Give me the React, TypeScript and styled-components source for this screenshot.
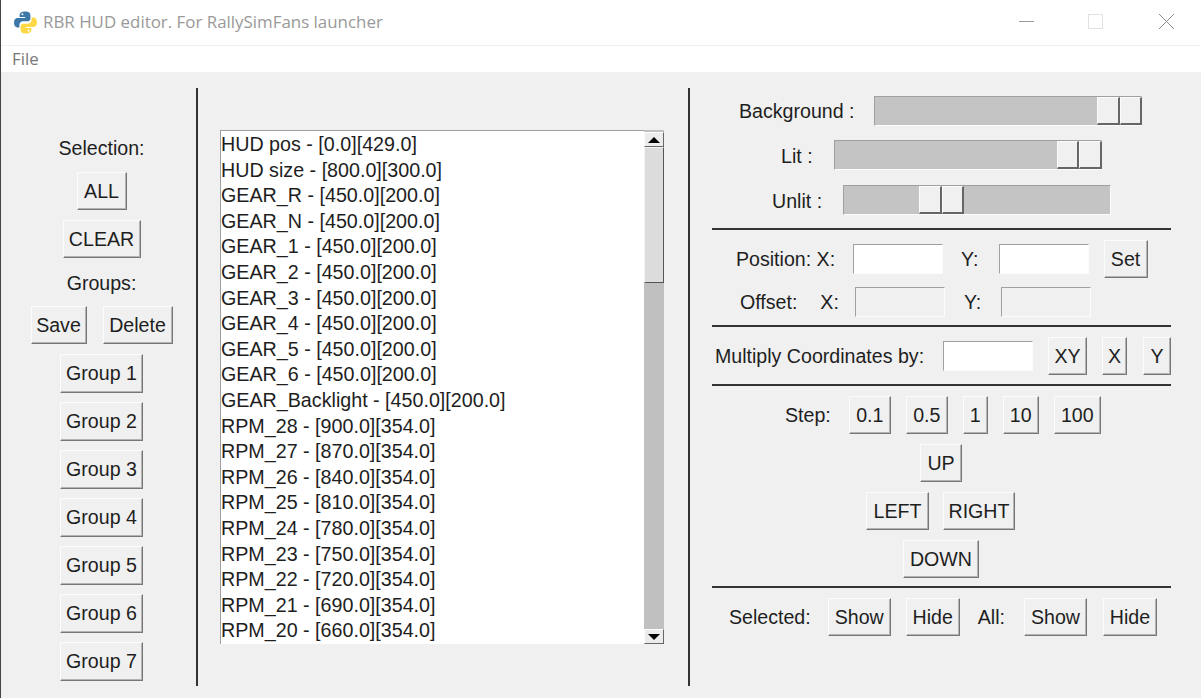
import { createGlobalStyle, styled } from "styled-components";

const LIST_ITEMS = [
  "HUD pos - [0.0][429.0]",
  "HUD size - [800.0][300.0]",
  "GEAR_R - [450.0][200.0]",
  "GEAR_N - [450.0][200.0]",
  "GEAR_1 - [450.0][200.0]",
  "GEAR_2 - [450.0][200.0]",
  "GEAR_3 - [450.0][200.0]",
  "GEAR_4 - [450.0][200.0]",
  "GEAR_5 - [450.0][200.0]",
  "GEAR_6 - [450.0][200.0]",
  "GEAR_Backlight - [450.0][200.0]",
  "RPM_28 - [900.0][354.0]",
  "RPM_27 - [870.0][354.0]",
  "RPM_26 - [840.0][354.0]",
  "RPM_25 - [810.0][354.0]",
  "RPM_24 - [780.0][354.0]",
  "RPM_23 - [750.0][354.0]",
  "RPM_22 - [720.0][354.0]",
  "RPM_21 - [690.0][354.0]",
  "RPM_20 - [660.0][354.0]",
];

const GROUPS = ["Group 1", "Group 2", "Group 3", "Group 4", "Group 5", "Group 6", "Group 7"];

const GlobalStyle = createGlobalStyle`
  html, body {
    margin: 0;
    padding: 0;
    overflow: hidden;
    background: #f0f0f0;
  }
  * {
    box-sizing: border-box;
  }
`;

const Window = styled.div`
  width: 1201px;
  height: 698px;
  display: flex;
  flex-direction: column;
  border-left: 1px solid #444;
  background: #f0f0f0;
  font-family: "Liberation Sans", Arial, sans-serif;
  font-size: 19.6px;
  color: #1e1e1e;
  overflow: hidden;
`;

const TitleBar = styled.div`
  height: 46px;
  flex: none;
  display: flex;
  align-items: center;
  padding-left: 12px;
  background: #fff;
  border-bottom: 1px solid #f0f0f0;
`;

const TitleText = styled.span`
  margin: 0 0 2px 5px;
  font-family: "Open Sans", sans-serif;
  font-size: 16.9px;
  color: #999;
  flex: 1;
`;

const WindowControls = styled.div`
  display: flex;
  align-items: center;
  height: 100%;
  margin-right: 27px;
`;

const ControlIcon = styled.svg<{ $ml?: number }>`
  width: 15px;
  height: 15px;
  margin: 0 0 2px ${(p) => p.$ml ?? 0}px;
  fill: none;
`;

const MenuBar = styled.div`
  height: 26px;
  flex: none;
  display: flex;
  align-items: center;
  padding: 0 0 1px 11px;
  background: #fff;
  font-family: "Open Sans", sans-serif;
  font-size: 16.8px;
  color: #777;
`;

const Body = styled.div`
  flex: 1;
  display: flex;
  min-height: 0;
`;

const LeftColumn = styled.div`
  width: 195px;
  flex: none;
  display: flex;
  flex-direction: column;
  align-items: center;
  padding: 65px 0 0 6px;
`;

const Divider = styled.div`
  width: 2px;
  height: 598px;
  flex: none;
  margin-top: 16px;
  background: #333;
`;

const MiddleColumn = styled.div`
  width: 490px;
  flex: none;
  padding: 58px 0 0 22px;
`;

const RightColumn = styled.div`
  flex: 1;
  padding: 24px 0 0 22px;
`;

const Label = styled.span<{ $ml?: number; $mt?: number }>`
  flex: none;
  white-space: nowrap;
  line-height: 22px;
  margin-left: ${(p) => p.$ml ?? 0}px;
  margin-top: ${(p) => p.$mt ?? 0}px;
`;

const Button = styled.button<{ $w: number; $h?: number; $ml?: number; $mt?: number }>`
  width: ${(p) => p.$w}px;
  height: ${(p) => p.$h ?? 38}px;
  flex: none;
  padding: 0;
  margin-left: ${(p) => p.$ml ?? 0}px;
  margin-top: ${(p) => p.$mt ?? 0}px;
  background: #f0f0f0;
  border: 1px solid;
  border-color: #fcfcfc #777 #777 #fcfcfc;
  box-shadow: inset -1px -1px 0 #b4b4b4;
  border-radius: 0;
  font-family: inherit;
  font-size: 19.6px;
  color: #1e1e1e;
`;

const ButtonPair = styled.div`
  display: flex;
  gap: 16px;
  margin: 12px 0 10px;
`;

const ListBox = styled.div`
  width: 444px;
  height: 514px;
  display: flex;
`;

const ListItems = styled.ul`
  flex: 1;
  margin: 0;
  padding: 1px 0 0 0;
  list-style: none;
  background: #fff;
  border-top: 1px solid #a0a0a0;
  border-left: 1px solid #a0a0a0;
  overflow: hidden;
`;

const ListItem = styled.li`
  height: 25.6px;
  line-height: 25.6px;
  white-space: nowrap;
  font-size: 19.7px;
`;

const ScrollBar = styled.div`
  width: 20px;
  flex: none;
  display: flex;
  flex-direction: column;
  padding-top: 2px;
  background: #c0c0c0;
`;

const ScrollArrow = styled.div<{ $down?: boolean }>`
  height: 15px;
  flex: none;
  display: flex;
  align-items: center;
  justify-content: center;
  background: #ececec;
  border: 1px solid;
  border-color: #fcfcfc #666 #666 #fcfcfc;
  &::after {
    content: "";
    border-left: 6px solid transparent;
    border-right: 6px solid transparent;
    ${(p) => (p.$down ? "border-top: 6px solid #000;" : "border-bottom: 6px solid #000;")}
  }
`;

const ScrollThumb = styled.div`
  height: 136px;
  flex: none;
  background: #dcdcdc;
  border: 1px solid;
  border-color: #f4f4f4 #555 #555 #f4f4f4;
`;

const ScrollTrack = styled.div`
  flex: 1;
`;

const Row = styled.div<{ $pl: number; $mt: number; $h?: number }>`
  display: flex;
  align-items: center;
  height: ${(p) => p.$h ?? 38}px;
  padding-left: ${(p) => p.$pl}px;
  margin-top: ${(p) => p.$mt}px;
`;

const Rule = styled.div<{ $mt: number }>`
  width: 459px;
  height: 2px;
  margin-top: ${(p) => p.$mt}px;
  background: #333;
`;

const Trough = styled.div<{ $ml: number }>`
  width: 268px;
  height: 30px;
  flex: none;
  margin-left: ${(p) => p.$ml}px;
  display: flex;
  background: #c4c4c4;
  border-top: 1px solid #a0a0a0;
  border-left: 1px solid #a0a0a0;
  border-right: 1px solid #fcfcfc;
  border-bottom: 1px solid #fcfcfc;
`;

const ThumbHalf = styled.div<{ $offset?: number }>`
  width: 22.5px;
  height: 100%;
  flex: none;
  margin-left: ${(p) => p.$offset ?? 0}px;
  background: #f0f0f0;
  border: 1px solid;
  border-width: 1px 2px 2px 1px;
  border-color: #fcfcfc #666 #666 #fcfcfc;
`;

const Field = styled.div<{ $ml: number; $disabled?: boolean }>`
  width: 90px;
  height: 30px;
  flex: none;
  margin-left: ${(p) => p.$ml}px;
  background: ${(p) => (p.$disabled ? "#f0f0f0" : "#fff")};
  border: 1px solid;
  border-color: #a0a0a0 #fcfcfc #fcfcfc #a0a0a0;
`;

const PythonLogo = () => (
  <svg width="25" height="25" viewBox="0 0 25 25">
    <path
      fill="#3b78a8"
      d="M12 1.5c-3.6 0-5.4 1.3-5.4 3.4V7h5.6v1H4.6C2.4 8 1 9.8 1 12.6s1.3 4.9 3.4 4.9h2v-2.6c0-2 1.7-3.6 3.7-3.6h4.4c1.6 0 2.9-1.3 2.9-2.9V4.9c0-2-1.9-3.4-4.4-3.4zM9.4 3.2a1 1 0 1 1 0 2 1 1 0 0 1 0-2z"
    />
    <path
      fill="#ffd845"
      d="M13 23.5c3.6 0 5.4-1.3 5.4-3.4V18h-5.6v-1h7.6c2.2 0 3.6-1.8 3.6-4.6s-1.3-4.9-3.4-4.9h-2v2.6c0 2-1.7 3.6-3.7 3.6h-4.4c-1.6 0-2.9 1.3-2.9 2.9v3.5c0 2 1.9 3.4 4.4 3.4zm2.6-1.7a1 1 0 1 1 0-2 1 1 0 0 1 0 2z"
    />
  </svg>
);

const Slider = ({ ml, offset }: { ml: number; offset: number }) => (
  <Trough $ml={ml}>
    <ThumbHalf $offset={offset} />
    <ThumbHalf />
  </Trough>
);

export default function App() {
  return (
    <Window>
      <GlobalStyle />
      <TitleBar>
        <PythonLogo />
        <TitleText>RBR HUD editor. For RallySimFans launcher</TitleText>
        <WindowControls>
          <ControlIcon viewBox="0 0 15 15">
            <path d="M0 7.5h15" stroke="#999" />
          </ControlIcon>
          <ControlIcon viewBox="0 0 15 15" $ml={54}>
            <rect x="0.5" y="0.5" width="14" height="14" stroke="#e2e2e2" />
          </ControlIcon>
          <ControlIcon viewBox="0 0 15 15" $ml={56}>
            <path d="M0 0l15 15M15 0L0 15" stroke="#8c8c8c" />
          </ControlIcon>
        </WindowControls>
      </TitleBar>
      <MenuBar>File</MenuBar>
      <Body>
        <LeftColumn>
          <Label>Selection:</Label>
          <Button $w={50} $mt={13}>ALL</Button>
          <Button $w={78} $mt={10}>CLEAR</Button>
          <Label $mt={14}>Groups:</Label>
          <ButtonPair>
            <Button $w={56}>Save</Button>
            <Button $w={70}>Delete</Button>
          </ButtonPair>
          {GROUPS.map((g, i) => (
            <Button key={g} $w={83} $h={39} $mt={i === 0 ? 0 : 9}>{g}</Button>
          ))}
        </LeftColumn>
        <Divider />
        <MiddleColumn>
          <ListBox>
            <ListItems>
              {LIST_ITEMS.map((item) => (
                <ListItem key={item}>{item}</ListItem>
              ))}
            </ListItems>
            <ScrollBar>
              <ScrollArrow />
              <ScrollThumb />
              <ScrollTrack />
              <ScrollArrow $down />
            </ScrollBar>
          </ListBox>
        </MiddleColumn>
        <Divider />
        <RightColumn>
          <Row $pl={27} $mt={0} $h={30}>
            <Label>Background :</Label>
            <Slider ml={20} offset={222} />
          </Row>
          <Row $pl={69} $mt={14} $h={30}>
            <Label $mt={2}>Lit :</Label>
            <Slider ml={21} offset={222} />
          </Row>
          <Row $pl={60} $mt={15} $h={30}>
            <Label $mt={2}>Unlit :</Label>
            <Slider ml={21} offset={75} />
          </Row>
          <Rule $mt={13} />
          <Row $pl={24} $mt={10}>
            <Label>Position: X:</Label>
            <Field $ml={18} />
            <Label $ml={18}>Y:</Label>
            <Field $ml={20} />
            <Button $w={44} $ml={15}>Set</Button>
          </Row>
          <Row $pl={28} $mt={9} $h={30}>
            <Label>Offset:</Label>
            <Label $ml={23}>X:</Label>
            <Field $ml={16} $disabled />
            <Label $ml={19}>Y:</Label>
            <Field $ml={20} $disabled />
          </Row>
          <Rule $mt={8} />
          <Row $pl={3} $mt={10}>
            <Label>Multiply Coordinates by:</Label>
            <Field $ml={19} />
            <Button $w={39} $ml={15}>XY</Button>
            <Button $w={25} $ml={15}>X</Button>
            <Button $w={28} $ml={16}>Y</Button>
          </Row>
          <Rule $mt={9} />
          <Row $pl={73} $mt={10}>
            <Label>Step:</Label>
            <Button $w={42} $ml={18}>0.1</Button>
            <Button $w={42} $ml={15}>0.5</Button>
            <Button $w={25} $ml={15}>1</Button>
            <Button $w={36} $ml={15}>10</Button>
            <Button $w={47} $ml={15}>100</Button>
          </Row>
          <Row $pl={208} $mt={10}>
            <Button $w={42}>UP</Button>
          </Row>
          <Row $pl={154} $mt={10}>
            <Button $w={63}>LEFT</Button>
            <Button $w={72} $ml={14}>RIGHT</Button>
          </Row>
          <Row $pl={191} $mt={10}>
            <Button $w={76}>DOWN</Button>
          </Row>
          <Rule $mt={8} />
          <Row $pl={17} $mt={10}>
            <Label>Selected:</Label>
            <Button $w={63} $ml={17}>Show</Button>
            <Button $w={54} $ml={15}>Hide</Button>
            <Label $ml={18}>All:</Label>
            <Button $w={63} $ml={19}>Show</Button>
            <Button $w={54} $ml={16}>Hide</Button>
          </Row>
        </RightColumn>
      </Body>
    </Window>
  );
}
